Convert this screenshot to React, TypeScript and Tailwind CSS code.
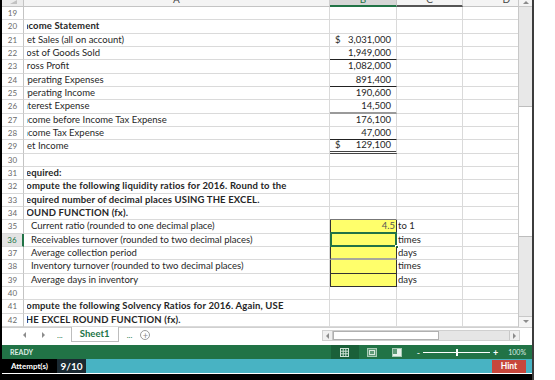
import React from "react";

type Row = {
  n: number;
  a?: string;
  bold?: boolean;
  indent?: boolean;
  b?: string;
  dollar?: boolean;
  bBorder?: string;
  c?: string;
  yellow?: boolean;
};

const rows: Row[] = [
  { n: 19 },
  { n: 20, a: "Income Statement", bold: true },
  { n: 21, a: "Net Sales (all on account)", b: "3,031,000", dollar: true },
  { n: 22, a: "Cost of Goods Sold", b: "1,949,000", bBorder: "border-b border-b-[#222]" },
  { n: 23, a: "Gross Profit", b: "1,082,000" },
  { n: 24, a: "Operating Expenses", b: "891,400", bBorder: "border-b border-b-[#222]" },
  { n: 25, a: "Operating Income", b: "190,600" },
  { n: 26, a: "Interest Expense", b: "14,500", bBorder: "border-b-2 border-b-[#9a9a9a]" },
  { n: 27, a: "Income before Income Tax Expense", b: "176,100" },
  { n: 28, a: "Income Tax Expense", b: "47,000", bBorder: "border-b border-b-[#222]" },
  { n: 29, a: "Net Income", b: "129,100", dollar: true, bBorder: "border-b-[3px] border-double border-b-[#444]" },
  { n: 30 },
  { n: 31, a: "Required:", bold: true },
  { n: 32, a: "Compute the following liquidity ratios for 2016. Round to the", bold: true },
  { n: 33, a: " required number of decimal places USING THE EXCEL.", bold: true },
  { n: 34, a: "ROUND FUNCTION (fx).", bold: true },
  { n: 35, a: "Current ratio (rounded to one decimal place)", indent: true, yellow: true, b: "4.5", c: "to 1", bBorder: "border-b border-b-[#217346]" },
  { n: 36, a: "Receivables turnover (rounded to two decimal places)", indent: true, yellow: true, c: "times", bBorder: "border-b border-b-[#217346]" },
  { n: 37, a: "Average collection period", indent: true, yellow: true, c: "days", bBorder: "border-b-2 border-b-[#a8a89a]" },
  { n: 38, a: "Inventory turnover (rounded to two decimal places)", indent: true, yellow: true, c: "times", bBorder: "border-b border-b-[#333]" },
  { n: 39, a: "Average days in inventory", indent: true, yellow: true, c: "days", bBorder: "border-b border-b-[#333]" },
  { n: 40 },
  { n: 41, a: "Compute the following Solvency Ratios for 2016. Again, USE", bold: true },
  { n: 42, a: "THE EXCEL ROUND FUNCTION (fx).", bold: true },
];

function GridRow({ r }: { r: Row }) {
  const sel = r.n === 36;
  return (
    <div className="flex h-[13.33px] shrink-0">
      <div
        className={
          sel
            ? "w-[22px] shrink-0 border-r-2 border-r-[#217346] border-b border-b-[#d8d8d8] bg-[#e3e3e3] text-[#217346] text-[8px] flex items-center justify-center"
            : "w-[22px] shrink-0 border-r border-r-[#c4c4c4] border-b border-b-[#d8d8d8] text-[#6a6a6a] text-[8px] flex items-center justify-center"
        }
      >
        {r.n}
      </div>
      <div className="w-[306px] shrink-0 border-r border-r-[#dadada] border-b border-b-[#dadada] flex items-center">
        <div className="ml-[3px] flex-1 overflow-hidden whitespace-pre">
          {r.a && (
            <span className={(r.indent ? "ml-[4px] " : "-ml-[7px] ") + (r.bold ? "font-bold tracking-[0.15px]" : "")}>
              {r.a}
            </span>
          )}
        </div>
      </div>
      <div
        className={
          "relative w-[67px] shrink-0 flex items-center justify-between pl-[5px] " +
          (r.yellow ? "bg-[#ffff6b] border-x border-x-[#333] pr-[1px] text-[#555] " : "border-r border-r-[#dadada] pr-[5px] ") +
          (r.bBorder ?? "border-b border-b-[#dadada]") +
          (r.n === 34 ? " !border-b-[#777]" : "")
        }
      >
        <span>{r.dollar ? "$" : ""}</span>
        <span>{r.b}</span>
        {sel && (
          <>
            <div className="absolute -left-px -top-[2px] -right-px -bottom-px border-2 border-[#217346]" />
            <div className="absolute -right-[3px] -bottom-[3px] w-[4px] h-[4px] bg-[#217346] border border-white" />
          </>
        )}
      </div>
      <div className="w-[66px] shrink-0 border-r border-r-[#dadada] border-b border-b-[#dadada] flex items-center pl-[1px]">
        {r.c}
      </div>
      <div className="w-[57px] shrink-0 border-b border-b-[#dadada]" />
    </div>
  );
}

function Tri({ dir }: { dir: "l" | "r" | "u" | "d" }) {
  const pts = { l: "4,0 4,6 1,3", r: "1,0 1,6 4,3", u: "0,4 6,4 3,1", d: "0,1 6,1 3,4" }[dir];
  return (
    <svg width="6" height="6" viewBox="0 0 6 6">
      <polygon points={pts} fill="#8c8c8c" />
    </svg>
  );
}

export default function App() {
  return (
    <div className="w-[555px] h-[380px] bg-white flex overflow-hidden text-[#262626] text-[9.5px] font-['Lato','Liberation_Sans',sans-serif]">
      <div className="w-[534px] h-full flex flex-col border-l-2 border-l-black border-r-2 border-r-[#3c3c3c] shrink-0">
        {/* grid + vertical scroll */}
        <div className="h-[327px] flex shrink-0 overflow-hidden">
          <div className="w-[518px] flex flex-col overflow-hidden">
            <div className="h-[7px] flex shrink-0 overflow-hidden text-[10px] text-[#444]">
              <div className="w-[22px] shrink-0 bg-[#ececec] border-r border-r-[#c4c4c4] border-b border-b-[#c4c4c4] flex justify-center">
                <svg width="8" height="5" viewBox="0 0 8 5">
                  <polygon points="8,0 8,4 1,4" fill="#c2c2c2" />
                </svg>
              </div>
              <div className="w-[306px] shrink-0 bg-[#f4f4f4] border-r border-r-[#d0d0d0] border-b border-b-[#c4c4c4] text-center">
                <div className="-mt-[6px] leading-[10px]">A</div>
              </div>
              <div className="w-[67px] shrink-0 bg-[#d6d6d6] border-r border-r-[#c4c4c4] border-b-2 border-b-[#217346] text-center">
                <div className="-mt-[6px] leading-[10px] text-[#217346]">B</div>
              </div>
              <div className="w-[66px] shrink-0 bg-[#f4f4f4] border-r border-r-[#d0d0d0] border-b-2 border-b-[#555] text-center">
                <div className="-mt-[6px] leading-[10px]">C</div>
              </div>
              <div className="w-[57px] shrink-0 bg-[#f4f4f4] border-b border-b-[#c4c4c4] text-right pr-[10px]">
                <div className="-mt-[6px] leading-[10px]">D</div>
              </div>
            </div>
            {rows.map((r) => (
              <GridRow key={r.n} r={r} />
            ))}
          </div>
          <div className="w-[14px] shrink-0 bg-[#e8e8e8] border-l border-l-[#c8c8c8] flex flex-col">
            <div className="h-[7px] flex items-end justify-center bg-[#f4f4f4] border-b border-b-[#c8c8c8] overflow-hidden">
              <Tri dir="u" />
            </div>
            <div className="h-[99px]" />
            <div className="h-[131px] bg-white border-y border-y-[#bdbdbd]" />
            <div className="flex-1" />
            <div className="h-[11px] flex items-center justify-center bg-[#f4f4f4] border-t border-t-[#c8c8c8]">
              <Tri dir="d" />
            </div>
          </div>
        </div>

        {/* sheet tabs + horizontal scroll */}
        <div className="h-[18px] shrink-0 flex items-start bg-white border-t border-t-[#d0d0d0]">
          <div className="flex items-center h-[14px] pl-[20px] gap-[13px]">
            <Tri dir="l" />
            <Tri dir="r" />
          </div>
          <span className="ml-[10px] mt-[3px] text-[8px] leading-none text-[#217346]">...</span>
          <div className="ml-[8px] -mt-px w-[48px] h-[15px] bg-white border-x border-b border-[#bdbdbd] flex items-center justify-center text-[#217346] font-bold text-[9.5px]">
            Sheet1
          </div>
          <span className="ml-[8px] mt-[3px] text-[8px] leading-none text-[#217346]">...</span>
          <div className="ml-[8px] mt-[2px] w-[10px] h-[10px] rounded-full border border-[#9a9a9a] flex items-center justify-center text-[#8a8a8a] text-[9px] leading-none">
            +
          </div>
          <div className="ml-auto mr-[12px] mt-[2px] h-[11px] w-[198px] flex bg-[#e6e6e6] border border-[#d0d0d0]">
            <div className="w-[10px] h-full bg-[#f0f0f0] border-r border-r-[#c8c8c8] flex items-center justify-center">
              <Tri dir="l" />
            </div>
            <div className="w-[106px] h-full bg-white border border-[#b0b0b0]" />
            <div className="flex-1" />
            <div className="w-[10px] h-full bg-[#f0f0f0] border-l border-l-[#c8c8c8] flex items-center justify-center">
              <Tri dir="r" />
            </div>
          </div>
        </div>

        {/* status bar */}
        <div className="h-[14px] shrink-0 bg-[#217346] flex items-center text-white">
          <span className="ml-[8px] text-[7px] font-bold text-[#dfece4]">READY</span>
          <div className="ml-auto h-full w-[28px] bg-[#1a6039] flex items-center justify-center">
            <svg width="9" height="9" viewBox="0 0 9 9" fill="none" stroke="#cfe3d6" strokeWidth="1">
              <rect x="0.5" y="0.5" width="8" height="8" />
              <path d="M3.2 0.5V8.5M5.8 0.5V8.5M0.5 3.2H8.5M0.5 5.8H8.5" />
            </svg>
          </div>
          <div className="ml-[8px] w-[10px] h-[9px] flex items-center justify-center">
            <svg width="10" height="9" viewBox="0 0 10 9" fill="none">
              <rect x="0.5" y="0.5" width="9" height="8" fill="#5f9a77" stroke="#a9cbb6" />
              <rect x="2.5" y="2.5" width="5" height="4" stroke="#d8e8de" />
            </svg>
          </div>
          <div className="ml-[15px] w-[10px] h-[9px] flex items-center justify-center">
            <svg width="10" height="9" viewBox="0 0 10 9" fill="none">
              <rect x="0.5" y="0.5" width="9" height="8" fill="#e8f1eb" stroke="#a9cbb6" />
              <rect x="1" y="1" width="4" height="5" fill="#5f9a77" />
            </svg>
          </div>
          <span className="ml-[15px] text-[9px] leading-none">-</span>
          <div className="ml-[3px] relative w-[67px] h-[1px] bg-white">
            <div className="absolute left-[33px] -top-[3px] w-[2px] h-[7px] bg-white" />
          </div>
          <span className="ml-[3px] text-[9px] leading-none font-bold">+</span>
          <span className="ml-[10px] mr-[6px] text-[7px] text-[#dfece4]">100%</span>
        </div>

        {/* attempts bar */}
        <div className="h-[14px] shrink-0 bg-[#48b3c3] flex items-stretch">
          <div className="w-[55px] bg-black flex items-center justify-center text-white font-bold text-[8px]">
            Attempt(s)
          </div>
          <div className="w-[29px] bg-[#1b2a32] flex items-center justify-center text-white font-bold text-[10px]">
            9/10
          </div>
          <div className="ml-auto mr-[6px] mt-[1px] w-[34px] h-[13px] bg-[#c7473b] flex items-center justify-center text-white font-bold text-[8.5px]">
            Hint
          </div>
        </div>
        <div className="h-px shrink-0 bg-white" />
        <div className="flex-1 bg-black" />
      </div>
      <div className="flex-1 bg-white" />
    </div>
  );
}
